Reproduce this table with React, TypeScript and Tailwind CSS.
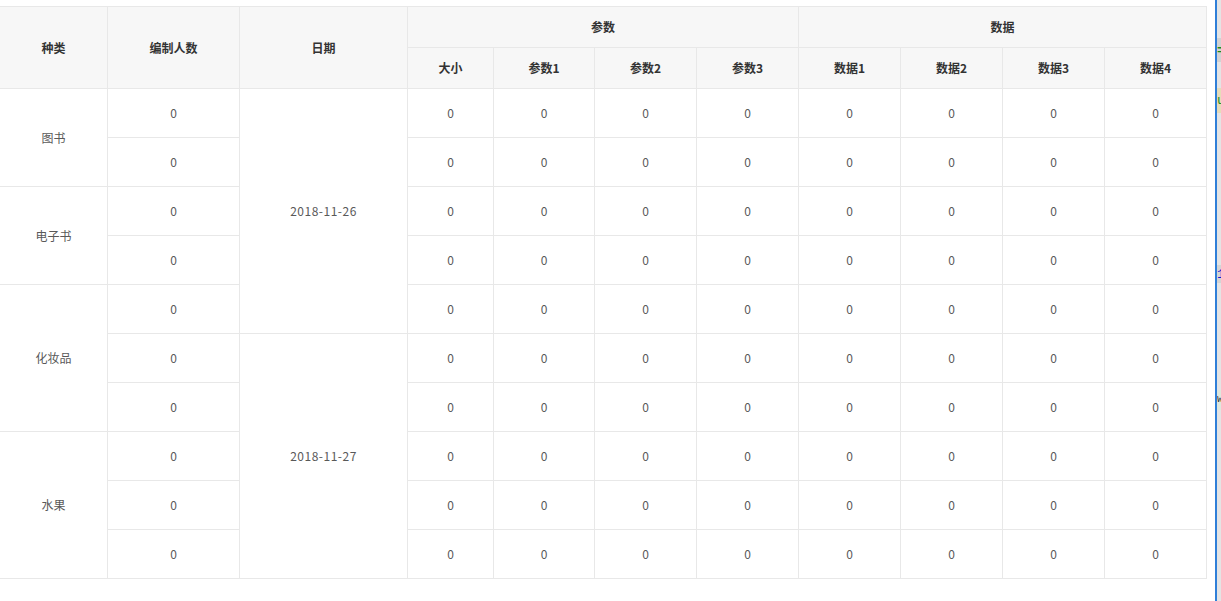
import React from "react";

const widths = [108, 132, 168, 86, 101, 102, 102, 102, 102, 102, 102];

type Row = { kind?: { name: string; span: number }; date?: { value: string; span: number } };

const rows: Row[] = [
  { kind: { name: "图书", span: 2 }, date: { value: "2018-11-26", span: 5 } },
  {},
  { kind: { name: "电子书", span: 2 } },
  {},
  { kind: { name: "化妆品", span: 3 } },
  { date: { value: "2018-11-27", span: 5 } },
  {},
  { kind: { name: "水果", span: 3 } },
  {},
  {},
];

const th = "border-r border-b border-[#e8e8e8] bg-[#f7f7f7] text-center font-semibold text-[#333] p-0";
const td = "border-r border-b border-[#e8e8e8] text-center text-[#595959] p-0";

function EditorStrip() {
  return (
    <div className="w-[6px] shrink-0 border-l-[2px] border-[#2f7fd8] bg-[#e4e4e4] flex flex-col overflow-hidden font-['Liberation_Mono',monospace] text-[13px] leading-none">
      <div className="h-[38px]" />
      <div className="h-[24px] bg-[#d2d2d2] flex items-center text-[#1a8a1a] font-bold">=</div>
      <div className="h-[26px]" />
      <div className="h-[25px] bg-[#e6dcb8] flex items-center text-[#1a8a1a]">u</div>
      <div className="h-[152px]" />
      <div className="h-[18px] bg-[#d4d4d4] flex items-center text-[#1515d0]">1</div>
      <div className="h-[107px]" />
      <div className="h-[20px] bg-[#dfe7dc] flex items-center text-[10px] text-[#333]">w</div>
    </div>
  );
}

export default function App() {
  return (
    <div className="flex w-[1221px] h-[601px] bg-white overflow-hidden font-['Noto_Sans_CJK_SC','Noto_Sans',sans-serif] text-[12px]">
      <div className="w-[1215px] shrink-0 pt-[6px]">
        <table className="table-fixed border-separate border-spacing-0 border-t border-[#e8e8e8] w-[1207px]">
          <colgroup>
            {widths.map((w, i) => (
              <col key={i} style={{ width: w }} />
            ))}
          </colgroup>
          <thead>
            <tr className="h-[41px]">
              <th rowSpan={2} className={th}>种类</th>
              <th rowSpan={2} className={th}>编制人数</th>
              <th rowSpan={2} className={th}>日期</th>
              <th colSpan={4} className={th}>参数</th>
              <th colSpan={4} className={th}>数据</th>
            </tr>
            <tr className="h-[41px]">
              <th className={th}>大小</th>
              <th className={th}>参数1</th>
              <th className={th}>参数2</th>
              <th className={th}>参数3</th>
              <th className={th}>数据1</th>
              <th className={th}>数据2</th>
              <th className={th}>数据3</th>
              <th className={th}>数据4</th>
            </tr>
          </thead>
          <tbody>
            {rows.map((r, i) => (
              <tr key={i} className="h-[49px]">
                {r.kind && (
                  <td rowSpan={r.kind.span} className={td}>
                    {r.kind.name}
                  </td>
                )}
                <td className={td}>0</td>
                {r.date && (
                  <td rowSpan={r.date.span} className={`${td} tracking-[0.5px]`}>
                    {r.date.value}
                  </td>
                )}
                {Array.from({ length: 8 }).map((_, j) => (
                  <td key={j} className={td}>0</td>
                ))}
              </tr>
            ))}
          </tbody>
        </table>
      </div>
      <EditorStrip />
    </div>
  );
}
